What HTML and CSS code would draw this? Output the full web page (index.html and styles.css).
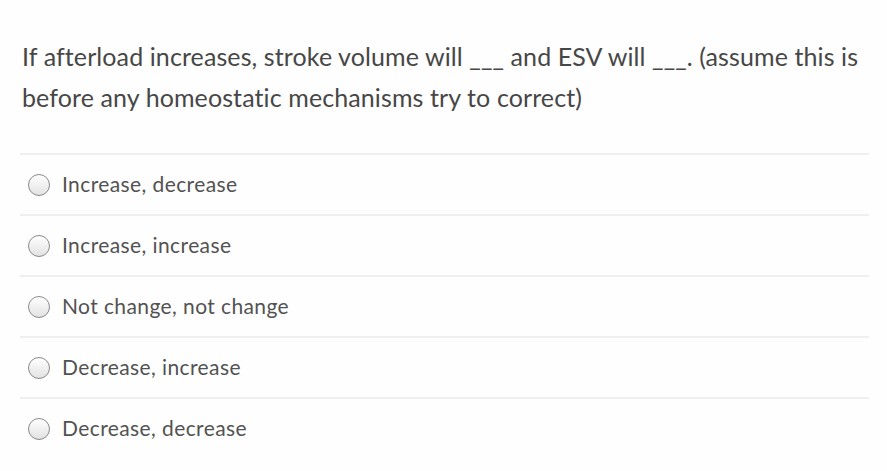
FILE: index.html
```html
<!DOCTYPE html>
<html lang="en">
<head>
<meta charset="utf-8">
<title>Quiz question</title>
<link rel="stylesheet" href="styles.css">
</head>
<body>
<div class="question">
  <p class="question-text">If afterload increases, stroke volume will ___ and ESV will ___. (assume this is before any homeostatic mechanisms try to correct)</p>
  <ul class="answers">
    <li class="answer"><span class="radio"></span><span class="label">Increase, decrease</span></li>
    <li class="answer"><span class="radio"></span><span class="label">Increase, increase</span></li>
    <li class="answer"><span class="radio"></span><span class="label">Not change, not change</span></li>
    <li class="answer"><span class="radio"></span><span class="label">Decrease, increase</span></li>
    <li class="answer"><span class="radio"></span><span class="label">Decrease, decrease</span></li>
  </ul>
</div>
</body>
</html>
```
FILE: styles.css
```css
html, body {
  margin: 0;
  padding: 0;
  background: #fefefe;
}
body {
  font-family: Lato, "Liberation Sans", sans-serif;
  color: #444444;
}
.question {
  padding: 36px 18px 0 20px;
}
.question-text {
  margin: 0 0 35px 2px;
  font-size: 25px;
  letter-spacing: 0.1px;
  line-height: 41px;
  color: #474747;
}
.answers {
  list-style: none;
  margin: 0;
  padding: 0;
}
.answer {
  display: flex;
  align-items: center;
  height: 59px;
  border-top: 2px solid #efefef;
  padding-left: 8px;
}
.radio {
  width: 20px;
  height: 20px;
  border: 1px solid #8a8a8a;
  border-radius: 50%;
  background: linear-gradient(#ffffff, #e2e2e2);
  flex: none;
}
.label {
  margin-left: 12px;
  margin-bottom: 2px;
  font-size: 21px;
  letter-spacing: 0.4px;
  color: #525252;
}
```
